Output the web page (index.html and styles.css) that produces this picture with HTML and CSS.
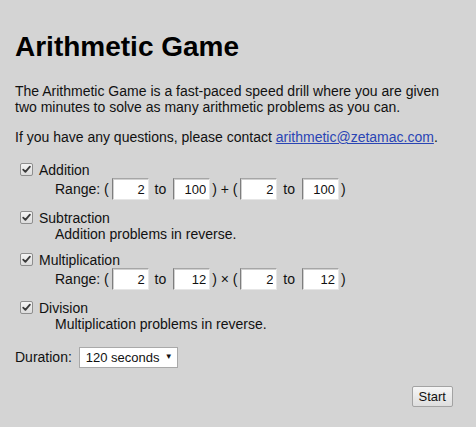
FILE: index.html
```html
<!DOCTYPE html>
<html>
<head>
<meta charset="utf-8">
<title>Arithmetic Game</title>
<link rel="stylesheet" href="styles.css">
</head>
<body>
<div class="page">
  <h1 class="title">Arithmetic Game</h1>
  <p class="text">The Arithmetic Game is a fast-paced speed drill where you are given two minutes to solve as many arithmetic problems as you can.</p>
  <p class="text">If you have any questions, please contact <a class="link" href="#">arithmetic@zetamac.com</a>.</p>

  <div class="options">
    <div class="option">
      <label class="head"><span class="cb"><svg width="13" height="13" viewBox="0 0 13 13"><path d="M3.2 6.6 L5.4 8.9 L9.9 3.6" fill="none" stroke="#3a3a3a" stroke-width="1.8" stroke-linecap="round" stroke-linejoin="round"/></svg></span>Addition</label>
      <div class="body">Range: (<input class="num" value="2"> to <input class="num" value="100">) + (<input class="num" value="2"> to <input class="num" value="100">)</div>
    </div>
    <div class="option">
      <label class="head"><span class="cb"><svg width="13" height="13" viewBox="0 0 13 13"><path d="M3.2 6.6 L5.4 8.9 L9.9 3.6" fill="none" stroke="#3a3a3a" stroke-width="1.8" stroke-linecap="round" stroke-linejoin="round"/></svg></span>Subtraction</label>
      <div class="body desc">Addition problems in reverse.</div>
    </div>
    <div class="option">
      <label class="head"><span class="cb"><svg width="13" height="13" viewBox="0 0 13 13"><path d="M3.2 6.6 L5.4 8.9 L9.9 3.6" fill="none" stroke="#3a3a3a" stroke-width="1.8" stroke-linecap="round" stroke-linejoin="round"/></svg></span>Multiplication</label>
      <div class="body">Range: (<input class="num" value="2"> to <input class="num" value="12">) × (<input class="num" value="2"> to <input class="num" value="12">)</div>
    </div>
    <div class="option">
      <label class="head"><span class="cb"><svg width="13" height="13" viewBox="0 0 13 13"><path d="M3.2 6.6 L5.4 8.9 L9.9 3.6" fill="none" stroke="#3a3a3a" stroke-width="1.8" stroke-linecap="round" stroke-linejoin="round"/></svg></span>Division</label>
      <div class="body desc">Multiplication problems in reverse.</div>
    </div>
  </div>

  <div class="duration">
    <span class="dur-label">Duration:</span>
    <span class="select-wrap"><select class="select"><option>120 seconds</option></select></span>
  </div>

  <div class="actions">
    <button class="start">Start</button>
  </div>
</div>
</body>
</html>
```

FILE: styles.css
```css
html, body {
  margin: 0;
  padding: 0;
  background: #d4d4d4;
}
body {
  font-family: "Liberation Sans", Arial, sans-serif;
  font-size: 14px;
  color: #111;
}
.page {
  padding: 31px 23px 0 15px;
}
.title {
  font-size: 28px;
  line-height: 32px;
  font-weight: bold;
  margin: 0 0 20px;
  color: #000;
}
.text {
  margin: 0 0 14px;
  line-height: 16px;
}
.link {
  color: #2a45b4;
  text-decoration: underline;
}
.options {
  margin-top: 16px;
  display: flex;
  flex-direction: column;
  gap: 9px;
}
.option {
  display: flex;
  flex-direction: column;
}
.head {
  display: flex;
  align-items: center;
  height: 17px;
  padding-left: 5px;
}
.cb {
  width: 13px;
  height: 13px;
  box-sizing: border-box;
  border: 1px solid #8e8e8e;
  border-radius: 2px;
  background: linear-gradient(#f4f4f4, #dcdcdc);
  margin-right: 6px;
  position: relative;
}
.cb svg {
  position: absolute;
  left: -1px;
  top: -1px;
}
.body {
  padding-left: 40px;
  display: flex;
  align-items: center;
  height: 22px;
  white-space: pre;
}
.body.desc {
  height: 16px;
  line-height: 16px;
}
.num {
  appearance: none;
  -webkit-appearance: none;
  width: 37px;
  height: 22px;
  box-sizing: border-box;
  margin: 0 2px 0 3px;
  padding: 0 3px 0 2px;
  text-align: right;
  font-family: "Liberation Sans", Arial, sans-serif;
  font-size: 13px;
  color: #111;
  background: #fff;
  border-style: solid;
  border-width: 1px;
  border-color: #a6a6a6 #e6e6e6 #e6e6e6 #7e7e7e;
  box-shadow: inset 1px 1px 0 #d0d0d0;
  outline: none;
}
.duration {
  margin-top: 15px;
  display: flex;
  align-items: center;
  height: 20px;
}
.dur-label {
  margin-right: 7px;
}
.select-wrap {
  position: relative;
  display: inline-flex;
}
.select {
  appearance: none;
  -webkit-appearance: none;
  width: 99px;
  height: 21px;
  box-sizing: border-box;
  margin: 0;
  padding: 0 0 0 6px;
  border: 1px solid #a9a9a9;
  border-radius: 0;
  background: #fff;
  font-family: "Liberation Sans", Arial, sans-serif;
  font-size: 13px;
  color: #111;
}
.select-wrap::after {
  content: "▼";
  position: absolute;
  left: 86px;
  top: 5px;
  font-size: 8px;
  line-height: 10px;
  color: #111;
  pointer-events: none;
}
.actions {
  margin-top: 19px;
  display: flex;
  justify-content: flex-end;
}
.start {
  height: 21px;
  padding: 0 6px;
  box-sizing: border-box;
  border: 1px solid #a3a3a3;
  border-radius: 2px;
  background: linear-gradient(#f6f6f6, #dedede);
  font-family: "Liberation Sans", Arial, sans-serif;
  font-size: 13px;
  color: #111;
}
```
